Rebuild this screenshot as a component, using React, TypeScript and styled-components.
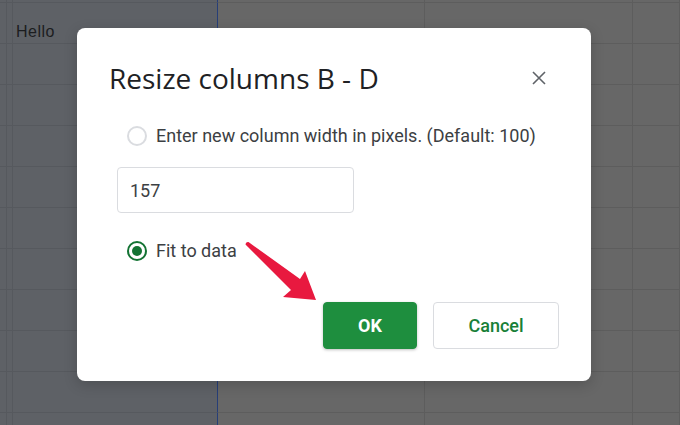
import * as React from "react";
import styled, { createGlobalStyle } from "styled-components";

const GlobalStyle = createGlobalStyle`
  html, body {
    margin: 0;
    padding: 0;
    background: rgb(103, 103, 103);
    overflow: hidden;
  }
`;

const Sheet = styled.div`
  position: relative;
  width: 680px;
  height: 425px;
  overflow: hidden;
  display: grid;
  grid-template-columns: 7px 6px 205px 207px 208px 1fr;
  grid-template-rows: 3px repeat(11, 41px);
`;

const Cell = styled.div<{ $cool?: boolean; $edge?: boolean }>`
  box-sizing: border-box;
  background: ${(p) => (p.$cool ? "rgb(94, 97, 102)" : "rgb(103, 103, 103)")};
  border-bottom: 1px solid ${(p) => (p.$cool ? "rgb(86, 89, 94)" : "rgb(93, 93, 93)")};
  border-right: 1px solid
    ${(p) =>
      p.$edge ? "rgb(38, 62, 120)" : p.$cool ? "rgb(86, 89, 94)" : "rgb(93, 93, 93)"};
  display: flex;
  align-items: flex-end;
  padding: 0 0 2px 3px;
  font-family: "Liberation Sans", Arial, sans-serif;
  font-size: 16px;
  letter-spacing: 0.5px;
  color: rgb(28, 29, 31);
  overflow: hidden;
  white-space: nowrap;
`;

const Dialog = styled.div`
  position: absolute;
  left: 77px;
  top: 28px;
  width: 514px;
  box-sizing: border-box;
  padding: 34px 32px 32px 32px;
  background: #fff;
  border-radius: 8px;
  box-shadow: 0 4px 14px rgba(0, 0, 0, 0.18);
  display: flex;
  flex-direction: column;
  font-family: Roboto, "Liberation Sans", sans-serif;
`;

const Header = styled.div`
  display: flex;
  align-items: center;
  justify-content: space-between;
  height: 32px;
`;

const Title = styled.h1`
  margin: 0;
  font-family: "Open Sans", Roboto, sans-serif;
  font-size: 28px;
  font-weight: 400;
  line-height: 32px;
  color: #202124;
`;

const CloseButton = styled.button`
  width: 24px;
  height: 24px;
  margin-right: 8px;
  padding: 0;
  border: none;
  background: none;
  display: flex;
  align-items: center;
  justify-content: center;
  color: #5f6368;
`;

const Body = styled.div`
  display: flex;
  flex-direction: column;
  padding: 0 8px;
  margin-top: 32px;
`;

const RadioRow = styled.label<{ $gapBefore?: number }>`
  display: flex;
  align-items: center;
  gap: 9px;
  padding-left: 10px;
  height: 20px;
  margin-top: ${(p) => p.$gapBefore ?? 0}px;
  font-size: 18px;
  line-height: 20px;
  color: #3c4043;
`;

const RadioCircle = styled.span<{ $checked?: boolean }>`
  box-sizing: border-box;
  width: 20px;
  height: 20px;
  border-radius: 50%;
  border: 2px solid ${(p) => (p.$checked ? "#137333" : "#dadce0")};
  display: flex;
  align-items: center;
  justify-content: center;
  flex-shrink: 0;

  &::after {
    content: "";
    width: 10px;
    height: 10px;
    border-radius: 50%;
    background: ${(p) => (p.$checked ? "#137333" : "transparent")};
  }
`;

const WidthInput = styled.div`
  box-sizing: border-box;
  margin-top: 21px;
  width: 237px;
  height: 46px;
  border: 1px solid #dadce0;
  border-radius: 4px;
  padding: 0 12px;
  display: flex;
  align-items: center;
  font-size: 18px;
  color: #3c4043;
`;

const Actions = styled.div`
  display: flex;
  justify-content: flex-end;
  gap: 16px;
  margin-top: 41px;
`;

const Button = styled.button<{ $primary?: boolean }>`
  box-sizing: border-box;
  height: 47px;
  min-width: ${(p) => (p.$primary ? 94 : 126)}px;
  border-radius: 4px;
  border: 1px solid ${(p) => (p.$primary ? "#1e8e3e" : "#dadce0")};
  background: ${(p) => (p.$primary ? "#1e8e3e" : "#fff")};
  color: ${(p) => (p.$primary ? "#fff" : "#188038")};
  box-shadow: ${(p) => (p.$primary ? "0 1px 3px rgba(0,0,0,0.25)" : "none")};
  font-family: Roboto, "Open Sans", sans-serif;
  font-size: 18px;
  font-weight: ${(p) => (p.$primary ? 700 : 500)};
  padding: 0;
`;

const Arrow = styled.svg`
  position: absolute;
  left: 240px;
  top: 235px;
  width: 90px;
  height: 75px;
`;

const columns = [
  { cool: true },
  { cool: true },
  { cool: true, edge: true },
  { cool: false },
  { cool: false },
  { cool: false },
];

export default function App() {
  const rows = Array.from({ length: 12 }, (_, i) => i);
  return (
    <>
      <GlobalStyle />
      <Sheet>
        {rows.map((r) =>
          columns.map((c, ci) => (
            <Cell key={`${r}-${ci}`} $cool={c.cool} $edge={c.edge}>
              {r === 1 && ci === 2 ? "Hello" : null}
            </Cell>
          ))
        )}

        <Dialog>
          <Header>
            <Title>Resize columns B - D</Title>
            <CloseButton aria-label="Close">
              <svg width="14" height="14" viewBox="0 0 14 14">
                <path
                  d="M1 1 L13 13 M13 1 L1 13"
                  stroke="currentColor"
                  strokeWidth="1.6"
                  fill="none"
                />
              </svg>
            </CloseButton>
          </Header>

          <Body>
            <RadioRow>
              <RadioCircle />
              Enter new column width in pixels. (Default: 100)
            </RadioRow>
            <WidthInput>157</WidthInput>
            <RadioRow $gapBefore={28}>
              <RadioCircle $checked />
              Fit to data
            </RadioRow>
          </Body>

          <Actions>
            <Button $primary>OK</Button>
            <Button>Cancel</Button>
          </Actions>
        </Dialog>

        <Arrow viewBox="0 0 90 75">
          <path
            d="M5.5 9.5 Q5.5 6.5 8.5 7 L60 44 L65 36 L76 65 L43 62 L51 55 Z"
            fill="#e8193f"
          />
        </Arrow>
      </Sheet>
    </>
  );
}
